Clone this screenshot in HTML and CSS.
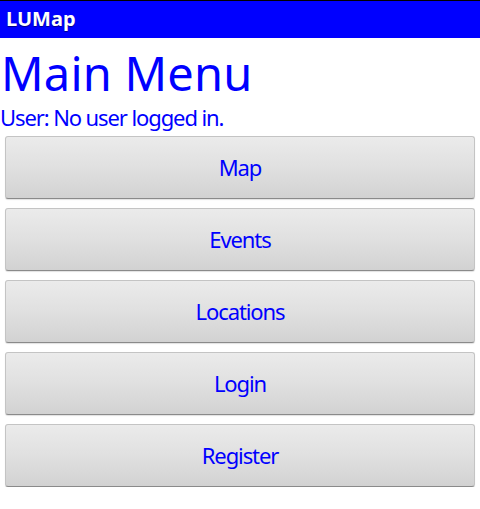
FILE: index.html
```html
<!DOCTYPE html>
<html>
<head>
<meta charset="utf-8">
<link rel="stylesheet" href="styles.css">
</head>
<body>
<div class="titlebar">LUMap</div>
<h1 class="heading">Main Menu</h1>
<div class="user">User: No user logged in.</div>
<div class="menu">
  <button class="btn">Map</button>
  <button class="btn">Events</button>
  <button class="btn">Locations</button>
  <button class="btn">Login</button>
  <button class="btn">Register</button>
</div>
</body>
</html>
```
FILE: styles.css
```css
html, body {
  margin: 0;
  padding: 0;
  background: #ffffff;
  font-family: "Noto Sans", "Open Sans", sans-serif;
  color: #0000ff;
}
.titlebar {
  border-top: 1px solid #000000;
  height: 37px;
  line-height: 35px;
  background: #0000ff;
  color: #ffffff;
  font-weight: bold;
  font-size: 20px;
  padding-left: 6px;
  text-shadow: 0 1px 1px rgba(0,0,0,0.5);
}
.heading {
  margin: 0;
  padding: 3px 0 0 1px;
  font-weight: normal;
  font-size: 47px;
  line-height: 64px;
  letter-spacing: 0.2px;
}
.user {
  font-size: 22px;
  line-height: 25px;
  letter-spacing: -1.1px;
}
.menu {
  display: flex;
  flex-direction: column;
  gap: 9px;
  padding: 0 5px;
  margin-top: 6px;
}
.btn {
  height: 63px;
  width: 100%;
  margin: 0;
  padding: 0;
  border: 1px solid #c4c4c4;
  border-bottom-color: #8a8a8a;
  border-radius: 3px;
  background: linear-gradient(to bottom, #ebebeb 0%, #e0e0e0 50%, #d2d2d2 100%);
  box-shadow: 0 1px 1px rgba(0,0,0,0.12);
  font-family: "Noto Sans", "Open Sans", sans-serif;
  font-size: 22px;
  line-height: 61px;
  letter-spacing: -1.1px;
  color: #0000ff;
  text-align: center;
}
```
